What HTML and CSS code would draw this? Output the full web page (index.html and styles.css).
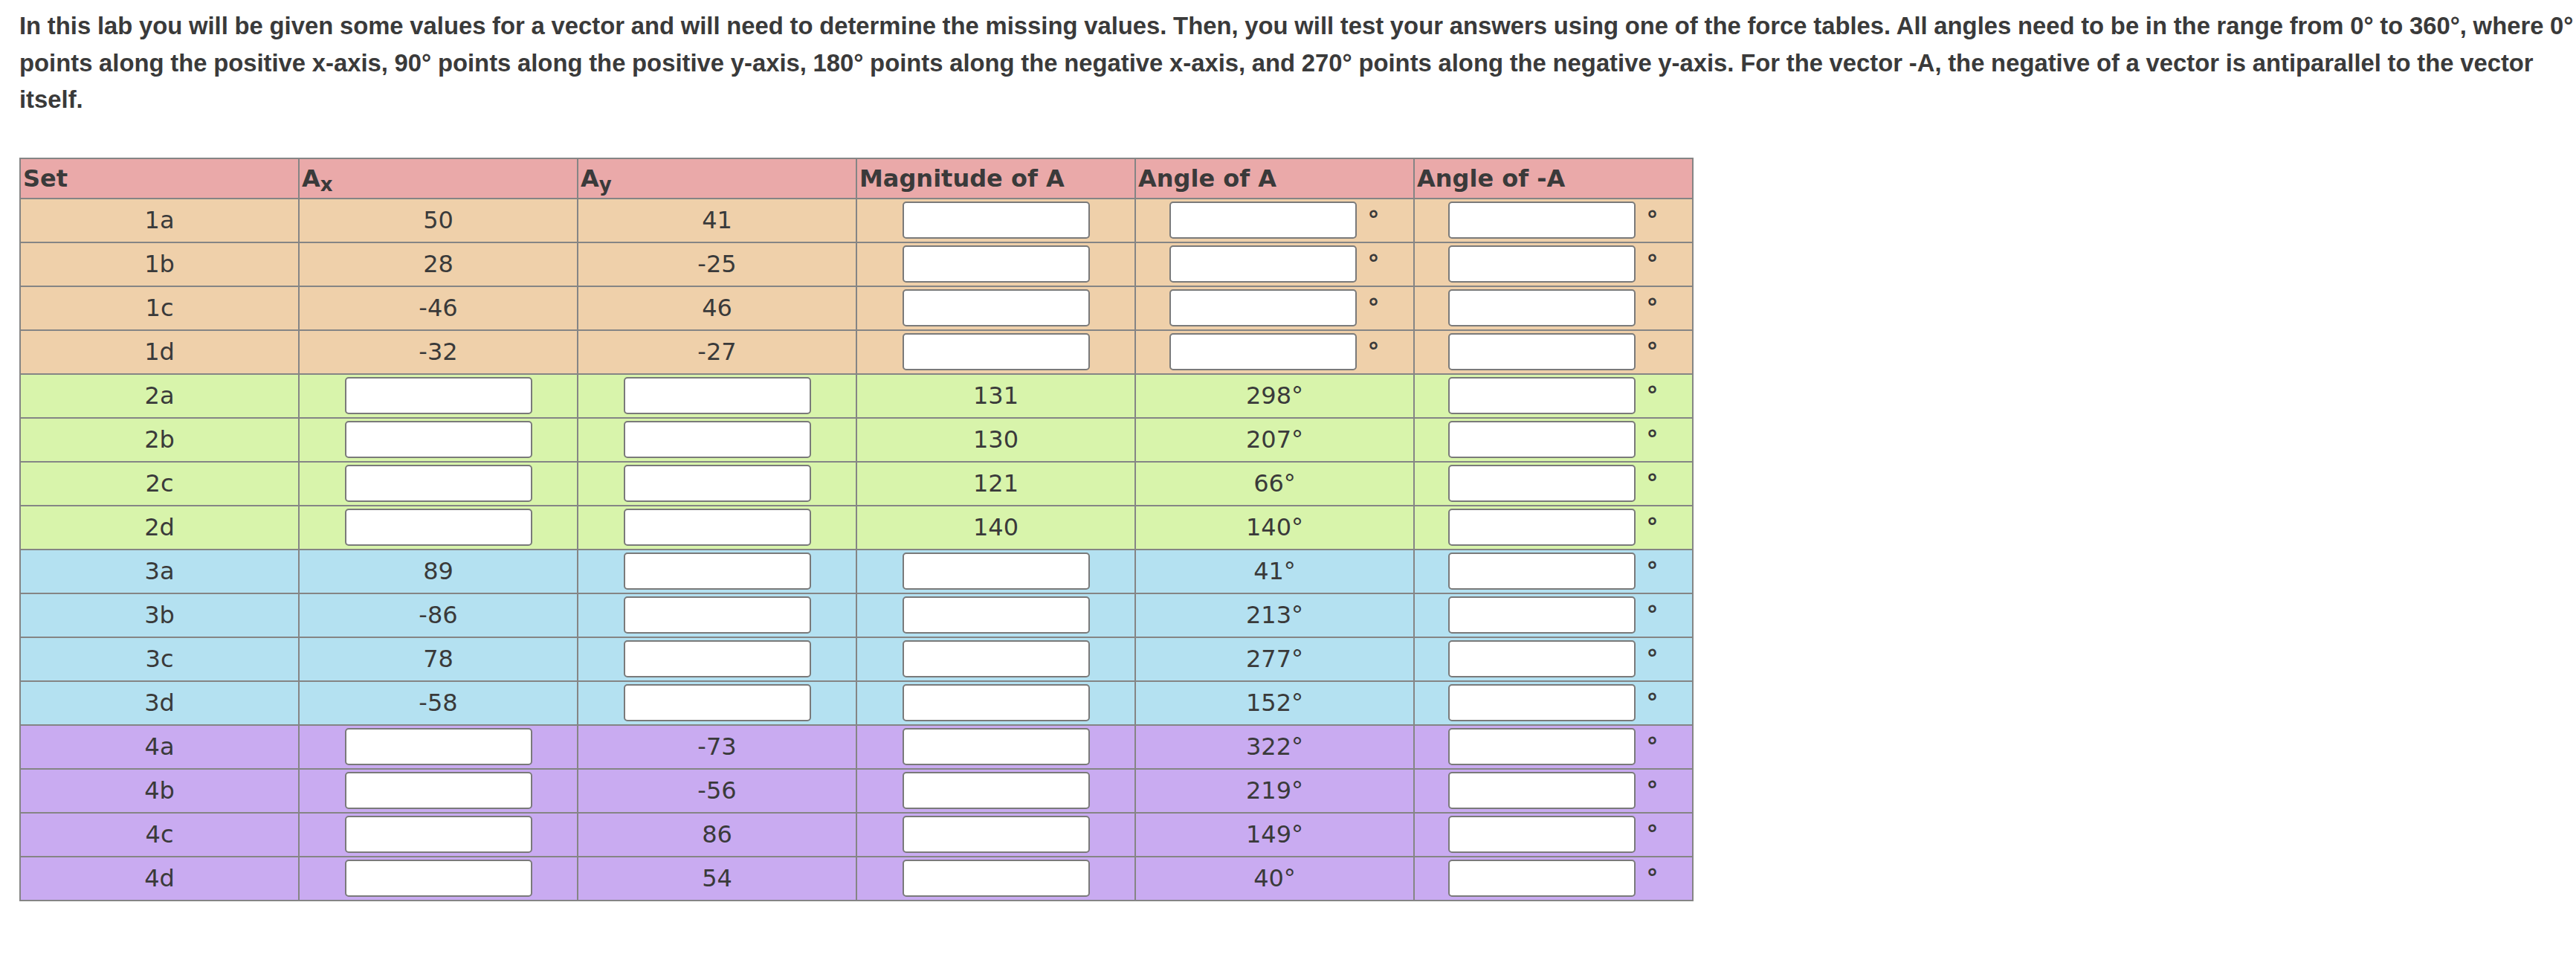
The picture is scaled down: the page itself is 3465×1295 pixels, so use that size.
FILE: index.html
```
<!DOCTYPE html>
<html>
<head>
<meta charset="utf-8">
<title>Vector lab</title>
<link rel="stylesheet" href="styles.css">
</head>
<body>
<p class="intro">In this lab you will be given some values for a vector and will need to determine the missing values. Then, you will test your answers using one of the force tables. All angles need to be in the range from 0° to 360°, where 0° points along the positive x-axis, 90° points along the positive y-axis, 180° points along the negative x-axis, and 270° points along the negative y-axis. For the vector -A, the negative of a vector is antiparallel to the vector itself.</p>
<table class="lab">
<thead>
<tr><th>Set</th><th>A<sub>x</sub></th><th>A<sub>y</sub></th><th>Magnitude of A</th><th>Angle of A</th><th>Angle of -A</th></tr>
</thead>
<tbody>
<tr class="g1"><td>1a</td><td>50</td><td>41</td><td><input class="box" type="text"></td><td><input class="box deg" type="text"> <span class="unit">°</span></td><td><input class="box deg" type="text"> <span class="unit">°</span></td></tr>
<tr class="g1"><td>1b</td><td>28</td><td>-25</td><td><input class="box" type="text"></td><td><input class="box deg" type="text"> <span class="unit">°</span></td><td><input class="box deg" type="text"> <span class="unit">°</span></td></tr>
<tr class="g1"><td>1c</td><td>-46</td><td>46</td><td><input class="box" type="text"></td><td><input class="box deg" type="text"> <span class="unit">°</span></td><td><input class="box deg" type="text"> <span class="unit">°</span></td></tr>
<tr class="g1"><td>1d</td><td>-32</td><td>-27</td><td><input class="box" type="text"></td><td><input class="box deg" type="text"> <span class="unit">°</span></td><td><input class="box deg" type="text"> <span class="unit">°</span></td></tr>
<tr class="g2"><td>2a</td><td><input class="box" type="text"></td><td><input class="box" type="text"></td><td>131</td><td>298°</td><td><input class="box deg" type="text"> <span class="unit">°</span></td></tr>
<tr class="g2"><td>2b</td><td><input class="box" type="text"></td><td><input class="box" type="text"></td><td>130</td><td>207°</td><td><input class="box deg" type="text"> <span class="unit">°</span></td></tr>
<tr class="g2"><td>2c</td><td><input class="box" type="text"></td><td><input class="box" type="text"></td><td>121</td><td>66°</td><td><input class="box deg" type="text"> <span class="unit">°</span></td></tr>
<tr class="g2"><td>2d</td><td><input class="box" type="text"></td><td><input class="box" type="text"></td><td>140</td><td>140°</td><td><input class="box deg" type="text"> <span class="unit">°</span></td></tr>
<tr class="g3"><td>3a</td><td>89</td><td><input class="box" type="text"></td><td><input class="box" type="text"></td><td>41°</td><td><input class="box deg" type="text"> <span class="unit">°</span></td></tr>
<tr class="g3"><td>3b</td><td>-86</td><td><input class="box" type="text"></td><td><input class="box" type="text"></td><td>213°</td><td><input class="box deg" type="text"> <span class="unit">°</span></td></tr>
<tr class="g3"><td>3c</td><td>78</td><td><input class="box" type="text"></td><td><input class="box" type="text"></td><td>277°</td><td><input class="box deg" type="text"> <span class="unit">°</span></td></tr>
<tr class="g3"><td>3d</td><td>-58</td><td><input class="box" type="text"></td><td><input class="box" type="text"></td><td>152°</td><td><input class="box deg" type="text"> <span class="unit">°</span></td></tr>
<tr class="g4"><td>4a</td><td><input class="box" type="text"></td><td>-73</td><td><input class="box" type="text"></td><td>322°</td><td><input class="box deg" type="text"> <span class="unit">°</span></td></tr>
<tr class="g4"><td>4b</td><td><input class="box" type="text"></td><td>-56</td><td><input class="box" type="text"></td><td>219°</td><td><input class="box deg" type="text"> <span class="unit">°</span></td></tr>
<tr class="g4"><td>4c</td><td><input class="box" type="text"></td><td>86</td><td><input class="box" type="text"></td><td>149°</td><td><input class="box deg" type="text"> <span class="unit">°</span></td></tr>
<tr class="g4"><td>4d</td><td><input class="box" type="text"></td><td>54</td><td><input class="box" type="text"></td><td>40°</td><td><input class="box deg" type="text"> <span class="unit">°</span></td></tr>
</tbody>
</table>
</body>
</html>
```

FILE: styles.css
```
html, body {
  margin: 0;
  background: #ffffff;
}
body {
  padding: 10px 0 0 26px;
  color: #3a3a3a;
}
.intro {
  margin: 0 0 53px 0;
  font-family: "Liberation Sans", Arial, sans-serif;
  font-weight: bold;
  font-size: 32.8px;
  line-height: 49.5px;
  word-spacing: -0.4px;
  color: #3a3a3a;
}
.lab {
  border-collapse: collapse;
  table-layout: fixed;
  width: 2252px;
  font-family: "DejaVu Sans", Verdana, sans-serif;
  font-size: 32px;
  color: #3a3a3a;
  border: 2px solid #858585;
}
.lab th, .lab td {
  border: 2px solid #858585;
  vertical-align: middle;
}
.lab th {
  background: #eaa9a9;
  text-align: left;
  font-weight: bold;
  height: 52px;
  padding: 0 3px;
}
.lab th sub {
  font-size: 26px;
  line-height: 0;
  vertical-align: -6px;
}
.lab td {
  height: 57px;
  padding: 0 4px;
  text-align: center;
  white-space: nowrap;
}
.g1 { background: #efd0aa; }
.g2 { background: #d8f4ab; }
.g3 { background: #b4e1f1; }
.g4 { background: #c9abf1; }
.box {
  box-sizing: border-box;
  width: 252px;
  height: 50px;
  margin: 0;
  padding: 0 6px;
  border: 2px solid #7a7a7a;
  border-radius: 5px;
  background: #ffffff;
  font-family: "DejaVu Sans", Verdana, sans-serif;
  font-size: 32px;
  vertical-align: baseline;
}
.box.deg {
  margin-right: 4px;
}
.unit {
  font-weight: bold;
}
```
